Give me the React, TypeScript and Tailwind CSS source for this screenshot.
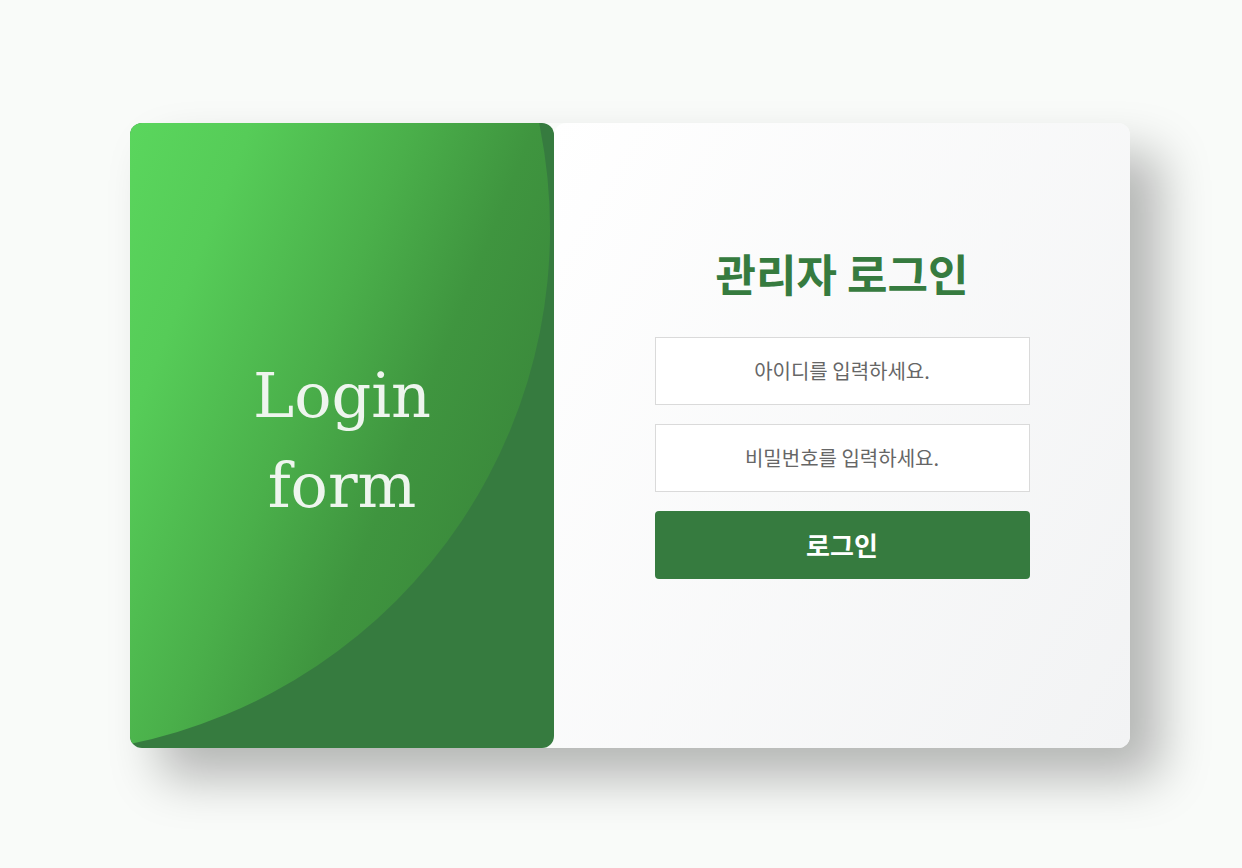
import React from 'react';

const korean = "font-['Noto_Sans_CJK_KR','Noto_Sans',sans-serif]";

const BrandPanel: React.FC = () => (
  <div className="relative w-[424px] shrink-0 overflow-hidden rounded-xl bg-[#367b3f]">
    {/* lighter arc in the top-left corner */}
    <div className="absolute inset-0 bg-[linear-gradient(112deg,#5ad65d_0%,#56cc58_18%,#4aaf4a_42%,#3f953f_60%,#3a883b_80%)] [clip-path:circle(525px_at_-105px_107px)]" />
    <div className="relative flex h-full items-center justify-center pt-[12px]">
      <h1 className="text-center font-['DejaVu_Serif',serif] text-[62px] leading-[90px] text-[#eef5ee]">
        Login
        <br />
        form
      </h1>
    </div>
  </div>
);

const LoginPanel: React.FC = () => (
  <div className={`flex flex-1 flex-col items-center rounded-xl bg-[linear-gradient(120deg,#ffffff_0%,#f2f3f4_100%)] pt-[120px] ${korean}`}>
    <h2 className="text-[44px] font-bold leading-[60px] text-[#367b3f]">관리자 로그인</h2>
    <form className="mt-[34px] flex w-[375px] flex-col gap-[19px]" onSubmit={(e) => e.preventDefault()}>
      <input
        type="text"
        placeholder="아이디를 입력하세요."
        className="h-[68px] w-full border border-[#dadada] bg-white text-center text-[20px] text-[#333] outline-none placeholder:text-[#666]"
      />
      <input
        type="password"
        placeholder="비밀번호를 입력하세요."
        className="h-[68px] w-full border border-[#dadada] bg-white text-center text-[20px] text-[#333] outline-none placeholder:text-[#666]"
      />
      <button
        type="submit"
        className="h-[68px] w-full rounded-[4px] bg-[#367b3f] text-[26px] font-bold text-white"
      >
        로그인
      </button>
    </form>
  </div>
);

export default function App() {
  return (
    <div className="flex min-h-screen items-center justify-center bg-[#f9fbf9] pl-[18px] pt-[2px]">
      <div className="flex h-[625px] w-[1000px] rounded-xl shadow-[30px_30px_50px_rgba(0,0,0,0.28)]">
        <BrandPanel />
        <LoginPanel />
      </div>
    </div>
  );
}
